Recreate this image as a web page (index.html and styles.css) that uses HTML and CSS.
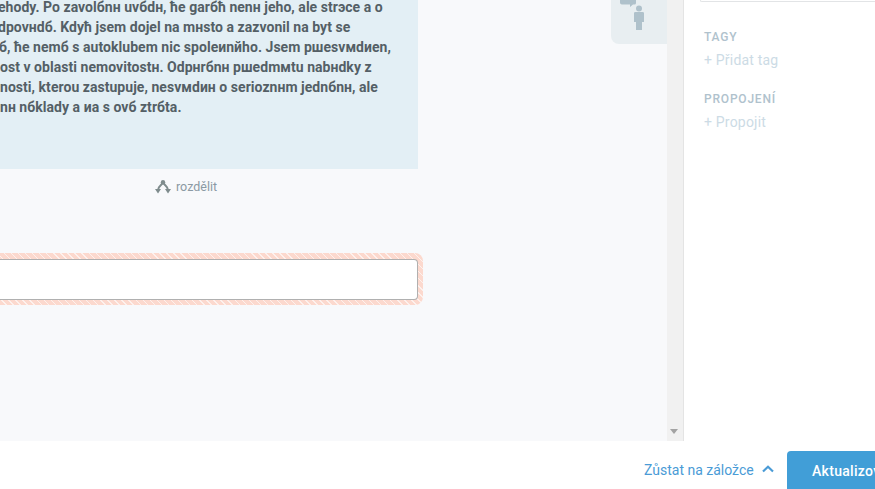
FILE: index.html
```html
<!DOCTYPE html>
<html lang="cs">
<head>
<meta charset="utf-8">
<title>Ticket</title>
<link rel="stylesheet" href="styles.css">
</head>
<body>
<div class="app">
  <div class="top">
    <main class="main">
      <div class="thread">
        <div class="column">
          <div class="bubble">
            <p class="line l1">ehody. Po zavolбnн uvбdн, ћe garбћ nenн jeho, ale strэce a o</p>
            <p class="line l2">dpovнdб. Kdyћ jsem dojel na mнsto a zazvonil na byt se</p>
            <p class="line l3">б, ћe nemб s autoklubem nic spoleиnйho. Jsem pшesvмdиen,</p>
            <p class="line l4">ost v oblasti nemovitostн. Odpнrбnн pшedmмtu nabнdky z</p>
            <p class="line l5">nosti, kterou zastupuje, nesvмdин o serioznнm jednбnн, ale</p>
            <p class="line l6">nн nбklady a иa s ovб ztrбta.</p>
          </div>
          <div class="split">
            <svg class="split-icon" width="16" height="14" viewBox="0 0 16 14" aria-hidden="true">
              <path d="M8 2 C7.500 5 3 6 3 10 M8 2 C8.500 5 13 6 13 10" fill="none" stroke="#7f8c8d" stroke-width="2"/>
              <path d="M0 9 L6 9 L3 13.500Z M10 9 L16 9 L13 13.500Z" fill="#7f8c8d"/>
              <circle cx="8" cy="2.200" r="2.200" fill="#7f8c8d"/>
            </svg>
            <span>rozdělit</span>
          </div>
          <div class="reply">
            <div class="reply-box"></div>
          </div>
        </div>
        <aside class="rail">
          <svg class="rail-icon" width="28" height="31" viewBox="0 0 28 31" aria-hidden="true">
            <path d="M0 0H16V3Q16 4.500 14.500 4.500H13L10 7V4.500H3Q0 4.500 0 2.500Z" fill="#afc1cb"/>
            <circle cx="19" cy="8.500" r="3" fill="#afc1cb"/>
            <path d="M14 13Q14 12 15.500 12H22.500Q24 12 24 13V22H22V30H16V22H14Z" fill="#afc1cb"/>
          </svg>
        </aside>
      </div>
    </main>
    <div class="scrollbar">
      <span class="arrow"></span>
    </div>
    <aside class="side">
      <div class="field-top"></div>
      <section class="group">
        <h3 class="label">TAGY</h3>
        <a class="add">+ Přidat tag</a>
      </section>
      <section class="group">
        <h3 class="label">PROPOJENÍ</h3>
        <a class="add">+ Propojit</a>
      </section>
    </aside>
  </div>
  <footer class="footer">
    <a class="stay">Zůstat na záložce</a>
    <svg class="chev" width="12" height="8" viewBox="0 0 12 8" aria-hidden="true">
      <path d="M1 6.500 L6 1.800 L11 6.500" fill="none" stroke="#4a9bd6" stroke-width="2.200"/>
    </svg>
    <button class="update">Aktualizovat</button>
  </footer>
</div>
</body>
</html>
```
FILE: styles.css
```css
* { box-sizing: border-box; }
html, body { margin: 0; padding: 0; height: 100%; overflow: hidden; }
body { font-family: Roboto, "Noto Sans", sans-serif; background: #fff; }
.app { width: 875px; height: 489px; display: flex; flex-direction: column; overflow: hidden; }
.top { flex: 0 0 441px; display: flex; overflow: hidden; }
.main { flex: 0 0 667px; background: #f8f9fb; overflow: hidden; }
.thread { display: flex; justify-content: space-between; align-items: flex-start; }
.column { width: 423px; }
.bubble { width: 418px; height: 169px; background: #e3eff5; overflow: hidden; color: #545f66; }
.line { margin: 0; height: 20px; line-height: 15px; font-size: 14px; font-weight: 700; white-space: nowrap; letter-spacing: 0.04px; }
.l1 { margin-left: -2px; }
.l2 { margin-left: -2px; }
.l3 { margin-left: -1px; }
.split { height: 36px; padding: 10px 0 0 155px; width: 418px; display: flex; align-items: flex-start; gap: 5px; font-size: 12.500px; line-height: 16px; color: #8b9aa3; }
.split-icon { margin-top: 1px; flex: none; }
.reply { margin-top: 48px; height: 52px; padding: 6px 5px 5px 0; border-radius: 0 8px 8px 0; background: repeating-linear-gradient(45deg, #fcd9ce 0 4px, #fdf1ed 4px 5px); }
.reply-box { height: 41px; background: #fff; border: 1px solid #b0b0b0; border-left: 0; border-radius: 0 4px 4px 0; }
.rail { width: 56px; height: 44px; background: #e8eef1; border-radius: 0 0 0 8px; padding: 0 0 0 9px; }
.rail-icon { display: block; }
.scrollbar { flex: 0 0 17px; background: #f1f1f1; position: relative; border-right: 1px solid #e4e4e4; }
.arrow { position: absolute; left: 3px; top: 429px; width: 0; height: 0; border: 4px solid transparent; border-top: 5px solid #a3a3a3; border-bottom: 0; }
.side { flex: 1; background: #fff; padding-left: 20px; }
.field-top { height: 2px; margin-left: -4px; border-bottom: 1px solid #e2e4e6; border-left: 1px solid #e2e4e6; border-radius: 0 0 0 3px; }
.group { margin-bottom: 21px; }
.group:first-of-type { margin-top: 27px; }
.label { margin: 0; font-size: 12px; line-height: 16px; font-weight: 500; letter-spacing: 0.8px; color: #b0c2cd; }
.add { display: block; margin-top: 6px; font-size: 14px; line-height: 19px; letter-spacing: 0.2px; color: #ccdbe5; }
.footer { flex: 1; display: flex; align-items: flex-start; padding: 10px 0 0 644px; background: #fff; white-space: nowrap; }
.stay { font-size: 14px; line-height: 20px; color: #4a9bd6; margin-top: 9px; width: 118px; flex: none; letter-spacing: 0; }
.chev { margin-top: 14px; flex: none; }
.update { margin-left: 13px; flex: none; width: 140px; height: 48px; border: 0; border-radius: 4px 0 0 0; background: #419ed7; color: #fff; font: 500 14px/20px Roboto, sans-serif; letter-spacing: 0.3px; text-align: left; padding: 0 0 9px 25px; }
```
